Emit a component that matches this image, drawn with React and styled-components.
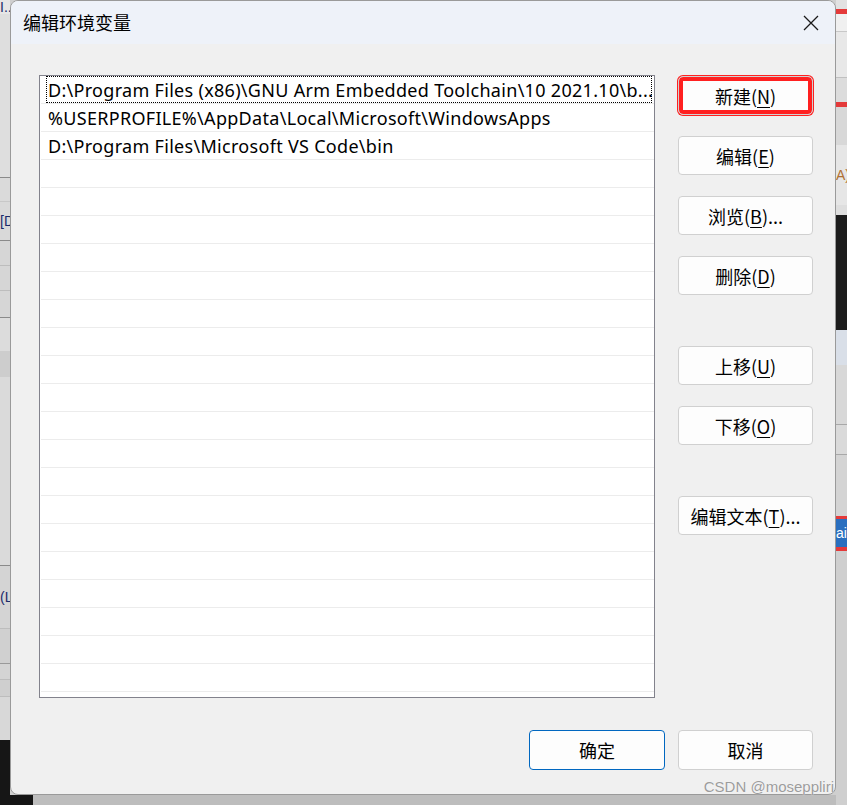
import React from 'react'
import styled, { createGlobalStyle } from 'styled-components'

const GlobalStyle = createGlobalStyle`
  html, body {
    margin: 0;
    padding: 0;
  }
  body {
    width: 847px;
    height: 805px;
    overflow: hidden;
    background: #cfcfcf;
    font-family: "Noto Sans", "Noto Sans CJK SC", sans-serif;
    color: #000;
  }
`

const Desktop = styled.div`
  position: relative;
  display: grid;
  grid-template-columns: 10px 826px 11px;
  grid-template-rows: 795px 10px;
  width: 847px;
  height: 805px;
  overflow: hidden;
`

const Strip = styled.div`
  grid-row: 1 / 3;
  grid-column: ${(p) => p.$col};
  display: flex;
  flex-direction: column;
  overflow: hidden;
`

const Band = styled.div`
  flex: ${(p) => (p.$h ? `0 0 ${p.$h}px` : '1 1 auto')};
  background: ${(p) => p.$bg};
  border-bottom: ${(p) => (p.$line ? `1px solid ${p.$line}` : 'none')};
  box-sizing: border-box;
  font-family: "Liberation Sans", sans-serif;
  font-size: 14px;
  line-height: ${(p) => (p.$h ? `${p.$h}px` : '14px')};
  color: ${(p) => p.$ink || '#1a2a6a'};
  white-space: nowrap;
`

const BottomStrip = styled.div`
  grid-row: 2;
  grid-column: 2;
  background: linear-gradient(to right, #141414 0 23px, #bdbdbd 23px);
`

const Dialog = styled.div`
  grid-row: 1;
  grid-column: 2;
  box-sizing: border-box;
  display: flex;
  flex-direction: column;
  background: #f0f0f0;
  border: 1px solid #9a9a9a;
  border-radius: 8px;
  overflow: hidden;
`

const TitleBar = styled.div`
  flex: 0 0 43px;
  display: flex;
  align-items: center;
  justify-content: space-between;
  padding: 0 15px 0 12px;
  background: #eef2f9;
  font-family: "Noto Sans CJK SC", sans-serif;
  font-size: 18px;
`

const Title = styled.span`
  margin-top: -1px;
`

const CloseButton = styled.div`
  display: flex;
  align-items: center;
  justify-content: center;
  width: 18px;
  height: 18px;
`

const Body = styled.div`
  display: grid;
  grid-template-columns: 616px 135px;
  column-gap: 23px;
  padding: 31px 22px 0 28px;
`

const List = styled.div`
  box-sizing: border-box;
  height: 623px;
  background: #fff;
  border: 1px solid #82828c;
  overflow: hidden;
`

const Row = styled.div`
  box-sizing: border-box;
  height: 28px;
  border-bottom: 1px solid #ececec;
  margin-left: 1px;
  padding: 0 2px 0 5px;
`

const Cell = styled.div`
  box-sizing: border-box;
  height: 27px;
  padding-left: 2px;
  font-size: 18px;
  letter-spacing: 0.3px;
  line-height: 28px;
  white-space: nowrap;
  overflow: hidden;
  outline: ${(p) => (p.$focused ? '1px dotted #000' : 'none')};
  outline-offset: -1px;
`

const ButtonColumn = styled.div`
  display: flex;
  flex-direction: column;
`

const Button = styled.button`
  box-sizing: border-box;
  width: ${(p) => (p.$wide ? 136 : 135)}px;
  height: ${(p) => (p.$tall ? 40 : 39)}px;
  margin-top: ${(p) => p.$gap || 0}px;
  padding: 0;
  background: #fdfdfd;
  border: 1px solid ${(p) => (p.$primary ? '#0067c0' : '#d0d0d0')};
  border-radius: ${(p) => (p.$marked ? 5 : 4)}px;
  font-family: "Noto Sans CJK SC", sans-serif;
  font-size: 18px;
  color: #000;
  box-shadow: ${(p) => (p.$marked ? '0 0 0 1px #ff2020, inset 0 0 0 4px #ff2020' : 'none')};
  u {
    text-underline-offset: 3px;
  }
`

const Footer = styled.div`
  display: flex;
  justify-content: flex-end;
  gap: 13px;
  padding: 32px 22px 0 0;
`

const Watermark = styled.div`
  position: absolute;
  right: 13px;
  bottom: 10px;
  font-family: "Liberation Sans", sans-serif;
  font-size: 15px;
  color: #9c9c9c;
  text-shadow: 0 0 1px #fff;
`

const leftBands = [
  { h: 14, bg: '#e6e6e6', text: 'I..' },
  { h: 164, bg: '#dedede', line: '#8a8a8a' },
  { h: 24, bg: '#dadada', line: '#c8c8c8' },
  { h: 38, bg: '#d9d9d9', line: '#8a8a8a', text: '[D' },
  { h: 25, bg: '#d6d6d6', line: '#bdbdbd' },
  { h: 25, bg: '#d6d6d6', line: '#bdbdbd' },
  { h: 27, bg: '#d6d6d6', line: '#8a8a8a' },
  { h: 33, bg: '#dcdcdc' },
  { h: 26, bg: '#cdcdcd' },
  { h: 189, bg: '#dadada', line: '#8a8a8a' },
  { h: 62, bg: '#d4d4d4', line: '#bdbdbd', text: '(L' },
  { h: 35, bg: '#d0d0d0', line: '#9a9a9a' },
  { h: 16, bg: '#d4d4d4', line: '#bdbdbd' },
  { h: 17, bg: '#cfcfcf', line: '#bdbdbd' },
  { h: 43, bg: '#d8d8d8' },
  { bg: '#161616' },
]

const rightBands = [
  { h: 9, bg: '#e2e2e2' },
  { h: 5, bg: '#e43a3a' },
  { h: 18, bg: '#f0f0f0', line: '#c8c8c8' },
  { h: 46, bg: '#e8e8e8', line: '#c0c0c0' },
  { h: 24, bg: '#dcdcdc' },
  { h: 5, bg: '#e43a3a' },
  { h: 38, bg: '#d8d8d8' },
  { h: 60, bg: '#e6e6e6', text: 'A)', ink: '#b07030' },
  { h: 10, bg: '#dedede' },
  { h: 115, bg: '#1c1c1c' },
  { h: 35, bg: '#d9dfe8' },
  { h: 60, bg: '#d8d8d8', line: '#a8a8a8' },
  { h: 30, bg: '#dadada', line: '#a8a8a8' },
  { h: 61, bg: '#d4d4d4' },
  { h: 3, bg: '#e43a3a' },
  { h: 28, bg: '#2a6fbf', text: 'ai', ink: '#fff' },
  { h: 4, bg: '#e43a3a' },
  { bg: '#cfcfcf' },
]

const paths = [
  'D:\\Program Files (x86)\\GNU Arm Embedded Toolchain\\10 2021.10\\b...',
  '%USERPROFILE%\\AppData\\Local\\Microsoft\\WindowsApps',
  'D:\\Program Files\\Microsoft VS Code\\bin',
]

const rows = Array.from({ length: 22 }, (_, i) => paths[i] || '')

const sideButtons = [
  { label: '新建', key: 'N', marked: true, gap: 1 },
  { label: '编辑', key: 'E', gap: 21 },
  { label: '浏览', key: 'B', tail: '...', gap: 21 },
  { label: '删除', key: 'D', gap: 21 },
  { label: '上移', key: 'U', gap: 51 },
  { label: '下移', key: 'O', gap: 21 },
  { label: '编辑文本', key: 'T', tail: '...', gap: 51 },
]

function CloseIcon() {
  return (
    <svg width="16" height="16" viewBox="0 0 16 16">
      <path d="M1 1 L15 15 M15 1 L1 15" stroke="#1a1a1a" strokeWidth="1.3" fill="none" />
    </svg>
  )
}

export default function App() {
  return (
    <Desktop>
      <GlobalStyle />
      <Strip $col={1}>
        {leftBands.map((b, i) => (
          <Band key={i} $h={b.h} $bg={b.bg} $line={b.line} $ink={b.ink}>
            {b.text}
          </Band>
        ))}
      </Strip>
      <Dialog>
        <TitleBar>
          <Title>编辑环境变量</Title>
          <CloseButton>
            <CloseIcon />
          </CloseButton>
        </TitleBar>
        <Body>
          <List>
            {rows.map((text, i) => (
              <Row key={i}>
                <Cell $focused={i === 0}>{text}</Cell>
              </Row>
            ))}
          </List>
          <ButtonColumn>
            {sideButtons.map((b) => (
              <Button key={b.key} $gap={b.gap} $marked={b.marked}>
                {b.label}(<u>{b.key}</u>){b.tail}
              </Button>
            ))}
          </ButtonColumn>
        </Body>
        <Footer>
          <Button $primary $wide $tall>确定</Button>
          <Button $tall>取消</Button>
        </Footer>
      </Dialog>
      <Strip $col={3}>
        {rightBands.map((b, i) => (
          <Band key={i} $h={b.h} $bg={b.bg} $line={b.line} $ink={b.ink}>
            {b.text}
          </Band>
        ))}
      </Strip>
      <BottomStrip />
      <Watermark>CSDN @moseppliri</Watermark>
    </Desktop>
  )
}
